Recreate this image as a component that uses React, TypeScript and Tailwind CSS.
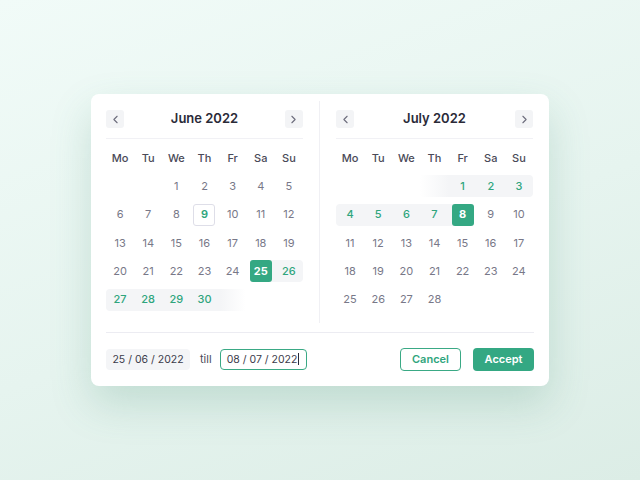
import { ChevronLeft, ChevronRight } from "lucide-react"

type Day = {
  n?: number
  kind?: "plain" | "range" | "start" | "end" | "today"
  // strip behind the number: full, left/right rounded ends, fades, half strips
  strip?: "full" | "l" | "r" | "fadeOut" | "fadeIn" | "halfL" | "halfR"
}

const WEEKDAYS = ["Mo", "Tu", "We", "Th", "Fr", "Sa", "Su"]

const june: Day[] = [
  {}, {}, { n: 1 }, { n: 2 }, { n: 3 }, { n: 4 }, { n: 5 },
  { n: 6 }, { n: 7 }, { n: 8 }, { n: 9, kind: "today" }, { n: 10 }, { n: 11 }, { n: 12 },
  { n: 13 }, { n: 14 }, { n: 15 }, { n: 16 }, { n: 17 }, { n: 18 }, { n: 19 },
  { n: 20 }, { n: 21 }, { n: 22 }, { n: 23 }, { n: 24 },
  { n: 25, kind: "start", strip: "halfR" }, { n: 26, kind: "range", strip: "r" },
  { n: 27, kind: "range", strip: "l" }, { n: 28, kind: "range", strip: "full" },
  { n: 29, kind: "range", strip: "full" }, { n: 30, kind: "range", strip: "full" },
  { strip: "fadeOut" }, {}, {},
]

const july: Day[] = [
  {}, {}, {}, { strip: "fadeIn" },
  { n: 1, kind: "range", strip: "full" }, { n: 2, kind: "range", strip: "full" }, { n: 3, kind: "range", strip: "r" },
  { n: 4, kind: "range", strip: "l" }, { n: 5, kind: "range", strip: "full" },
  { n: 6, kind: "range", strip: "full" }, { n: 7, kind: "range", strip: "full" },
  { n: 8, kind: "end", strip: "halfL" }, { n: 9 }, { n: 10 },
  { n: 11 }, { n: 12 }, { n: 13 }, { n: 14 }, { n: 15 }, { n: 16 }, { n: 17 },
  { n: 18 }, { n: 19 }, { n: 20 }, { n: 21 }, { n: 22 }, { n: 23 }, { n: 24 },
  { n: 25 }, { n: 26 }, { n: 27 }, { n: 28 }, {}, {}, {},
]

const stripClass: Record<NonNullable<Day["strip"]>, string> = {
  full: "bg-[#f4f5f7]",
  l: "bg-[#f4f5f7] rounded-l-[4px]",
  r: "bg-[#f4f5f7] rounded-r-[4px]",
  fadeOut: "bg-[linear-gradient(to_right,#f4f5f7_5%,rgba(244,245,247,0)_95%)]",
  fadeIn: "bg-[linear-gradient(to_right,rgba(244,245,247,0)_0%,#f4f5f7_100%)]",
  halfL: "bg-[linear-gradient(to_right,#f4f5f7_50%,transparent_50%)]",
  halfR: "bg-[linear-gradient(to_right,transparent_50%,#f4f5f7_50%)]",
}

function DayCell({ day }: { day: Day }) {
  const selected = day.kind === "start" || day.kind === "end"
  return (
    <div className="relative h-[28.33px] flex items-center justify-center">
      {day.strip && <div className={`absolute inset-x-0 top-[3px] h-[22px] ${stripClass[day.strip]}`} />}
      {day.n !== undefined && (
        <div
          className={
            "relative w-[22px] h-[22px] flex items-center justify-center rounded-[3px] text-[11px] leading-none " +
            (selected
              ? "bg-[#34a883] text-white font-bold"
              : day.kind === "today"
              ? "bg-white border border-[#dedee8] text-[#2fa57d] font-semibold"
              : day.kind === "range"
              ? "text-[#2fa57d] font-medium"
              : "text-[#787888]")
          }
        >
          {day.n}
        </div>
      )}
    </div>
  )
}

function NavButton({ dir }: { dir: "prev" | "next" }) {
  const Icon = dir === "prev" ? ChevronLeft : ChevronRight
  return (
    <button className="w-[18px] h-[18px] rounded-[3px] bg-[#f3f4f6] flex items-center justify-center text-[#6c6c7c]">
      <Icon size={13} strokeWidth={2} />
    </button>
  )
}

function Month({ title, days }: { title: string; days: Day[] }) {
  return (
    <div className="w-[197px]">
      <div className="h-[18px] flex items-center justify-between">
        <NavButton dir="prev" />
        <span className="text-[13px] font-semibold text-[#2a2a38]">{title}</span>
        <NavButton dir="next" />
      </div>
      <div className="mt-[10px] h-px bg-[#f1f1f5]" />
      <div className="mt-[5px] grid grid-cols-7">
        {WEEKDAYS.map((w) => (
          <div key={w} className="h-[28.33px] flex items-center justify-center text-[11px] font-medium text-[#4a4a58]">
            {w}
          </div>
        ))}
        {days.map((d, i) => (
          <DayCell key={i} day={d} />
        ))}
      </div>
    </div>
  )
}

export default function App() {
  return (
    <div
      className="w-[640px] h-[480px] flex justify-center pt-[94px] bg-[linear-gradient(160deg,#f1fbf8_0%,#e6f4ef_55%,#dcede6_100%)]"
      style={{ fontFamily: "Inter, 'Noto Sans', sans-serif" }}
    >
      <div className="w-[458px] h-fit bg-white rounded-[8px] px-[15px] pt-[16px] pb-[15px] shadow-[0_18px_40px_rgba(70,140,115,0.22)]">
        <div className="flex">
          <Month title="June 2022" days={june} />
          <div className="mx-[16px] w-px -my-[9px] bg-[#f0f0f4]" />
          <Month title="July 2022" days={july} />
        </div>
        <div className="mt-[18px] h-px bg-[#ececf2]" />
        <div className="mt-[15px] h-[23px] flex items-center text-[11px]">
          <div className="w-[84px] h-[21px] rounded-[4px] bg-[#f4f5f7] flex items-center justify-center text-[10.5px] text-[#3b3b4a]">
            25 / 06 / 2022
          </div>
          <span className="ml-[10px] text-[#4a4a58]">till</span>
          <div className="ml-[8px] w-[87px] h-[21px] rounded-[4px] border border-[#3aa985] flex items-center justify-center text-[10.5px] text-[#3b3b4a]">
            08 / 07 / 2022<span className="ml-px w-px h-[12px] bg-[#2a2a38]" />
          </div>
          <button className="ml-auto w-[61px] h-[23px] rounded-[4px] border border-[#3aa985] bg-white text-[#2fa57d] font-semibold">
            Cancel
          </button>
          <button className="ml-[12px] w-[61px] h-[23px] rounded-[4px] bg-[#34a883] text-white font-semibold">
            Accept
          </button>
        </div>
      </div>
    </div>
  )
}
